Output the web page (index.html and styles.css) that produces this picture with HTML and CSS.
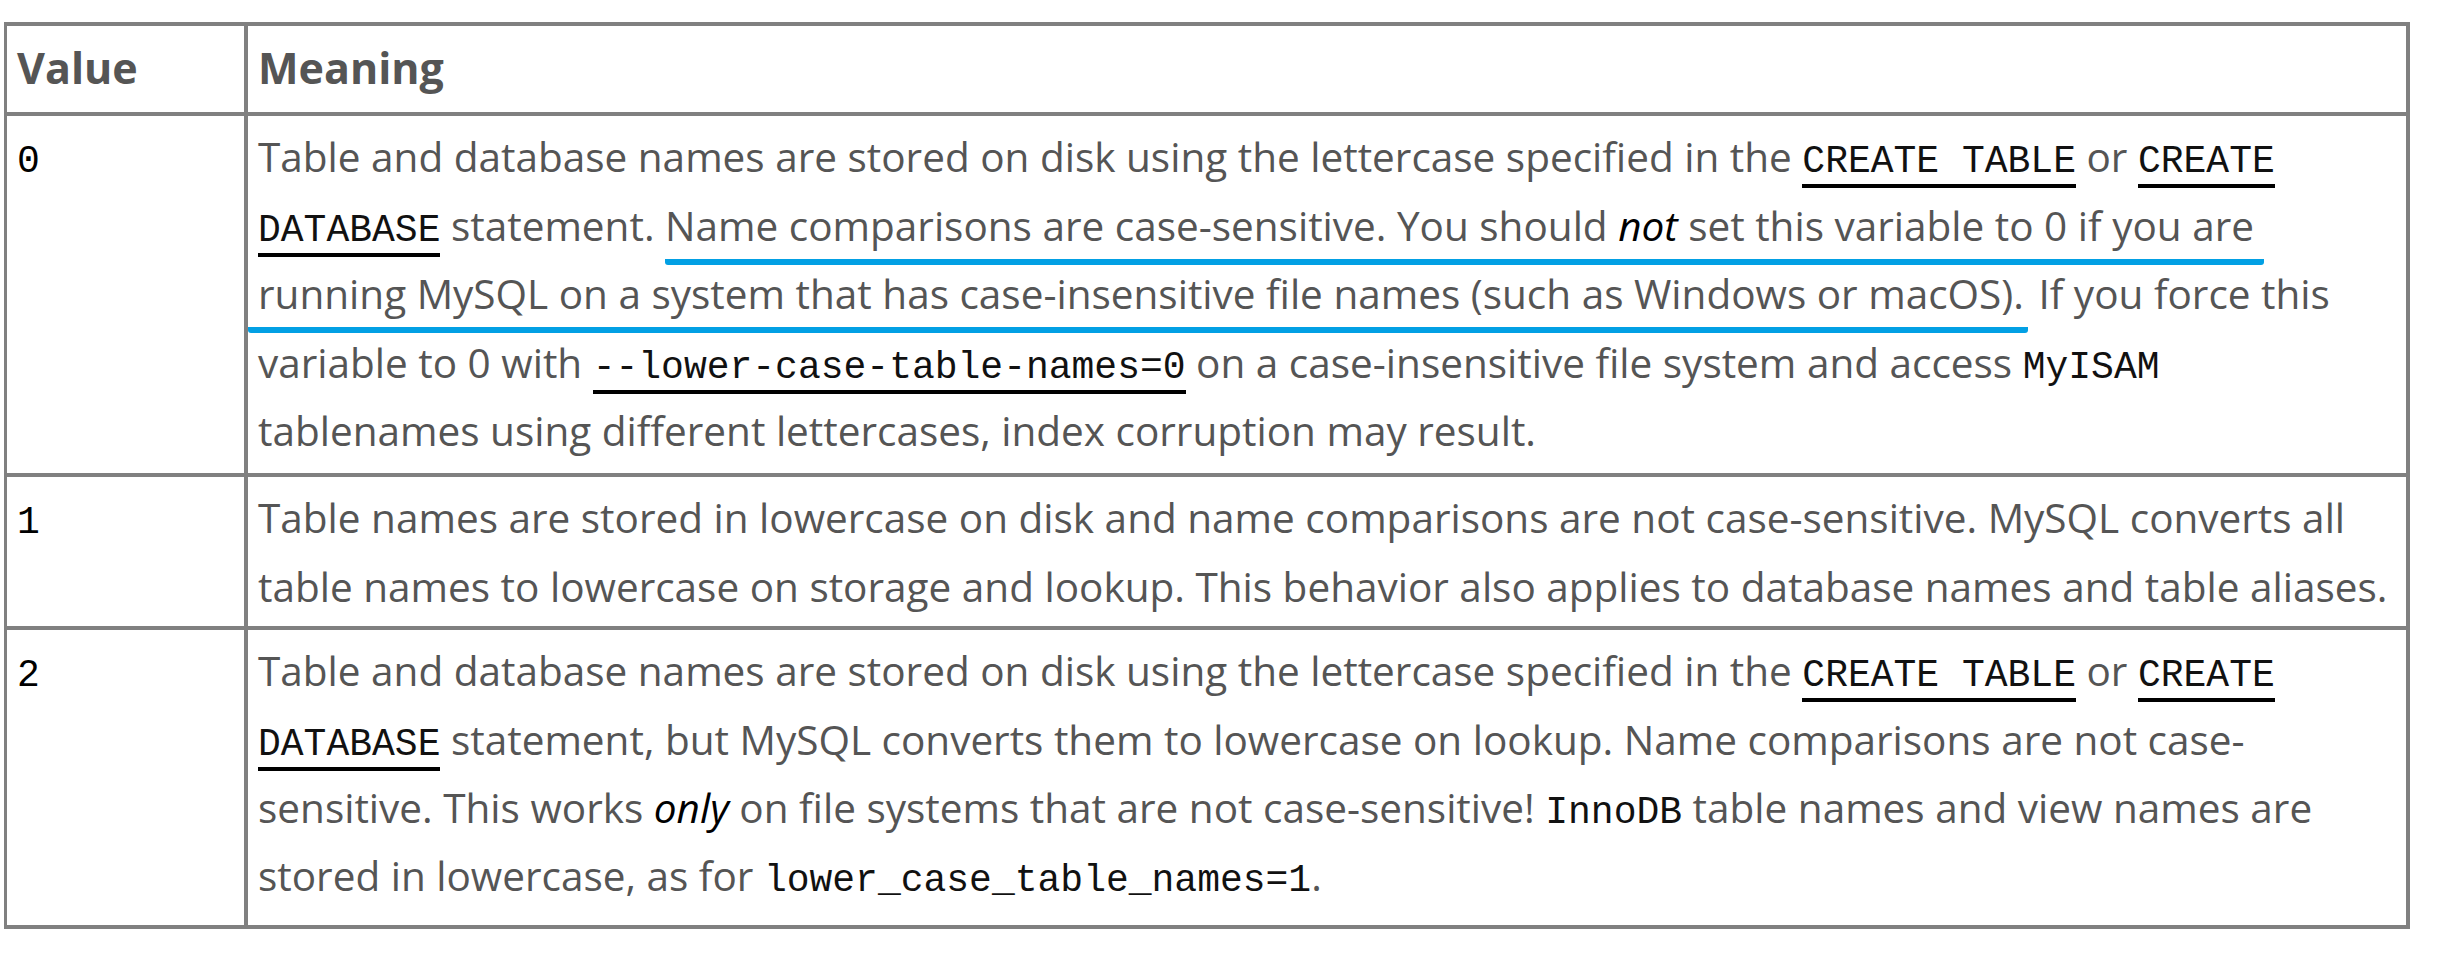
FILE: index.html
```html
<!DOCTYPE html>
<html lang="en">
<head>
<meta charset="utf-8">
<title>lower_case_table_names</title>
<link rel="stylesheet" href="styles.css">
</head>
<body>
<table class="info">
  <thead>
    <tr>
      <th class="col-value">Value</th>
      <th class="col-meaning">Meaning</th>
    </tr>
  </thead>
  <tbody>
    <tr>
      <td class="col-value"><code class="lit">0</code></td>
      <td class="col-meaning">Table and database names are stored on disk using the lettercase specified in the <a class="link"><code>CREATE TABLE</code></a> or <a class="link"><code>CREATE</code></a><br><a class="link"><code>DATABASE</code></a> statement. <span class="mark">Name comparisons are case-sensitive. You should <em>not</em> set this variable to 0 if you are</span><br><span class="mark mark-wide">running MySQL on a system that has case-insensitive file names (such as Windows or macOS).</span> If you force this<br>variable to 0 with <a class="link"><code>--lower-case-table-names=0</code></a> on a case-insensitive file system and access <code>MyISAM</code><br>tablenames using different lettercases, index corruption may result.</td>
    </tr>
    <tr class="row-short">
      <td class="col-value"><code class="lit">1</code></td>
      <td class="col-meaning">Table names are stored in lowercase on disk and name comparisons are not case-sensitive. MySQL converts all<br>table names to lowercase on storage and lookup. This behavior also applies to database names and table aliases.</td>
    </tr>
    <tr class="row-last">
      <td class="col-value"><code class="lit">2</code></td>
      <td class="col-meaning">Table and database names are stored on disk using the lettercase specified in the <a class="link"><code>CREATE TABLE</code></a> or <a class="link"><code>CREATE</code></a><br><a class="link"><code>DATABASE</code></a> statement, but MySQL converts them to lowercase on lookup. Name comparisons are not case-<br>sensitive. This works <em>only</em> on file systems that are not case-sensitive! <code>InnoDB</code> table names and view names are<br>stored in lowercase, as for <code>lower_case_table_names=1</code>.</td>
    </tr>
  </tbody>
</table>
</body>
</html>
```

FILE: styles.css
```css
html, body {
  margin: 0;
  padding: 0;
  background: #ffffff;
}

body {
  font-family: "Open Sans", "Liberation Sans", sans-serif;
  color: #555555;
}

.info {
  margin: 22px 0 0 4px;
  width: 2406px;
  table-layout: fixed;
  border-collapse: separate;
  border-spacing: 0;
  border-top: 4px solid #808080;
  border-left: 3px solid #808080;
}

.info th,
.info td {
  box-sizing: border-box;
  text-align: left;
  vertical-align: top;
  border-right: 4px solid #808080;
  border-bottom: 4px solid #808080;
}

.info th {
  font-size: 43px;
  font-weight: 700;
  line-height: 68.4px;
  padding: 8px 10px 10px 10px;
}

.info td {
  font-size: 40.5px;
  line-height: 68.4px;
  padding: 7px 10px 8px 10px;
}

.info .row-short td {
  padding-bottom: 5px;
}

.info .row-last td {
  padding-bottom: 14px;
}

.col-meaning {
  white-space: nowrap;
}

.col-value {
  width: 241px;
}

code {
  font-family: "Liberation Mono", "Courier New", monospace;
  font-size: 38px;
  line-height: 1;
  color: #111111;
}

.lit {
  color: #000000;
}

.link {
  color: #111111;
  text-decoration: none;
  border-bottom: 4px solid #000000;
}

em {
  color: #000000;
  font-style: italic;
}

.mark {
  line-height: 1;
  padding: 0 10px 6px 0;
  border-bottom: 6px solid #02a0e4;
  border-radius: 3px;
}

.mark-wide {
  margin-left: -10px;
  padding-left: 10px;
  padding-right: 4px;
}
```
